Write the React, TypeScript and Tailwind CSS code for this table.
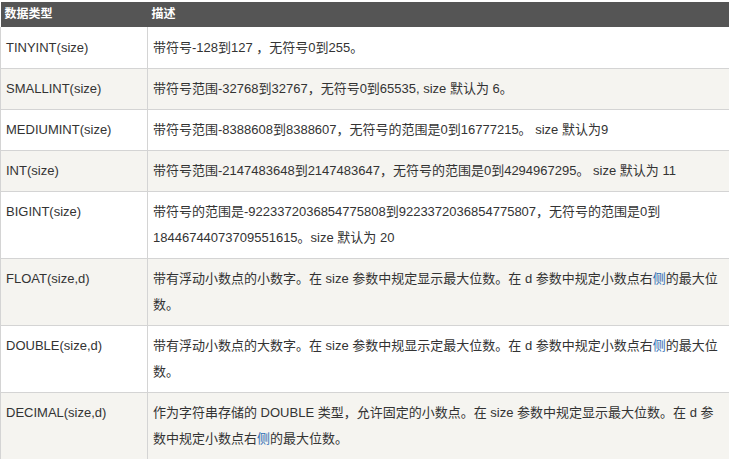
import React from 'react';

interface Row {
  type: string;
  desc: React.ReactNode;
}

const Side = () => <span className="text-[#2f6db3]">侧</span>;

const rows: Row[] = [
  { type: 'TINYINT(size)', desc: '带符号-128到127 ，无符号0到255。' },
  { type: 'SMALLINT(size)', desc: '带符号范围-32768到32767，无符号0到65535, size 默认为 6。' },
  { type: 'MEDIUMINT(size)', desc: '带符号范围-8388608到8388607，无符号的范围是0到16777215。 size 默认为9' },
  { type: 'INT(size)', desc: '带符号范围-2147483648到2147483647，无符号的范围是0到4294967295。 size 默认为 11' },
  {
    type: 'BIGINT(size)',
    desc: (
      <>
        带符号的范围是-9223372036854775808到9223372036854775807，无符号的范围是0到
        <br />
        18446744073709551615。size 默认为 20
      </>
    ),
  },
  {
    type: 'FLOAT(size,d)',
    desc: (
      <>
        带有浮动小数点的小数字。在 size 参数中规定显示最大位数。在 d 参数中规定小数点右<Side />的最大位
        <br />
        数。
      </>
    ),
  },
  {
    type: 'DOUBLE(size,d)',
    desc: (
      <>
        带有浮动小数点的大数字。在 size 参数中规显示定最大位数。在 d 参数中规定小数点右<Side />的最大位
        <br />
        数。
      </>
    ),
  },
  {
    type: 'DECIMAL(size,d)',
    desc: (
      <>
        作为字符串存储的 DOUBLE 类型，允许固定的小数点。在 size 参数中规定显示最大位数。在 d 参
        <br />
        数中规定小数点右<Side />的最大位数。
      </>
    ),
  },
];

export default function App() {
  return (
    <div
      className="w-[729px] h-[459px] overflow-hidden bg-white pt-[2px] text-[13px] text-[#333333]"
      style={{ fontFamily: '"Liberation Sans", "Noto Sans CJK SC", sans-serif' }}
    >
      <table className="w-[735px] border-collapse table-fixed">
        <colgroup>
          <col className="w-[147px]" />
          <col />
        </colgroup>
        <thead>
          <tr className="bg-[#555555] text-white text-[12px]">
            <th className="h-[25px] px-[4px] py-0 text-left font-bold leading-[25px] border-0">数据类型</th>
            <th className="h-[25px] px-[4px] py-0 text-left font-bold leading-[25px] border-0">描述</th>
          </tr>
        </thead>
        <tbody>
          {rows.map((r, i) => {
            const top = i === 0 ? 'border-t-white' : '';
            return (
              <tr key={r.type} className={i % 2 === 0 ? 'bg-white' : 'bg-[#f5f4f0]'}>
                <td className={`border border-[#d4d4d4] ${top} px-[5px] py-[7px] leading-[26px] align-top whitespace-nowrap`}>{r.type}</td>
                <td className={`border border-[#d4d4d4] ${top} px-[5px] py-[7px] leading-[26px] align-top whitespace-nowrap`}>{r.desc}</td>
              </tr>
            );
          })}
        </tbody>
      </table>
    </div>
  );
}
